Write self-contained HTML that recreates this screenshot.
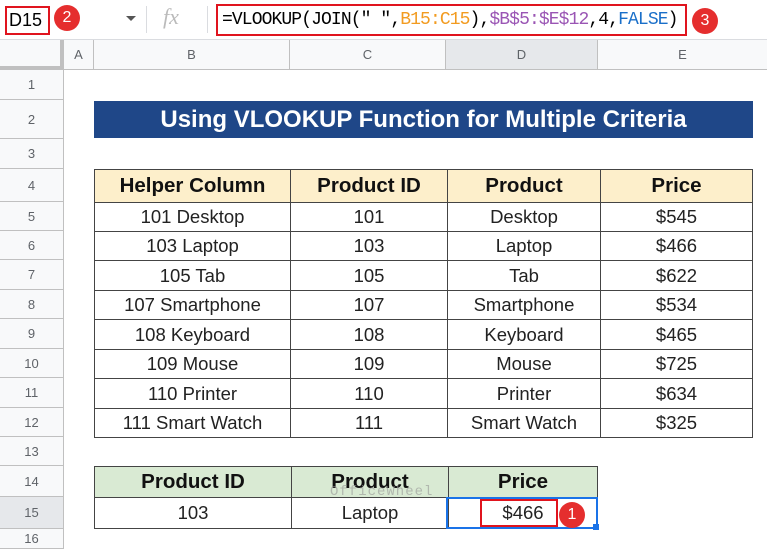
<!DOCTYPE html>
<html><head><style>
body{margin:0;width:767px;height:540px;overflow:hidden;background:#fff;font-family:"Liberation Sans",Arial,sans-serif;position:relative}
.a{position:absolute;box-sizing:border-box}
.rh{position:absolute;left:0;width:64px;background:#f8f9fa;border-bottom:1px solid #c0c0c0;border-right:1px solid #c0c0c0;color:#5f6368;font-size:13px;text-align:center;display:flex;align-items:center;justify-content:center;box-sizing:border-box}
.ch{position:absolute;top:40px;height:30px;background:#f8f9fa;border-right:1px solid #c0c0c0;border-bottom:1px solid #c0c0c0;color:#5f6368;font-size:13px;display:flex;align-items:center;justify-content:center;box-sizing:border-box}
table{position:absolute;border-collapse:collapse;font-size:18.5px;color:#222}
td{border:1.5px solid #444;text-align:center;padding:0}
th{border:1.5px solid #444;font-size:20.5px;font-weight:bold;color:#111;padding:0}
.badge{position:absolute;width:26px;height:26px;border-radius:50%;background:#e52e2e;color:#fff;font-size:16px;display:flex;align-items:center;justify-content:center;box-sizing:border-box}
</style></head><body>
<div class="a" style="left:0;top:0;width:767px;height:40px;border-bottom:1px solid #dadce0"></div>
<div class="a" style="left:5px;top:6px;width:45px;height:29px;border:2.5px solid #e0141e;font-size:18px;padding:2px 0 0 2px">D15</div>
<div class="badge" style="left:54px;top:5px">2</div>
<div class="a" style="left:126px;top:16px;width:0;height:0;border-left:5px solid transparent;border-right:5px solid transparent;border-top:5px solid #555"></div>
<div class="a" style="left:146px;top:6px;width:1px;height:27px;background:#dadce0"></div>
<div class="a" style="left:163px;top:4px;font-family:'Liberation Serif',serif;font-style:italic;font-size:22px;color:#bbb">fx</div>
<div class="a" style="left:207px;top:6px;width:1px;height:27px;background:#dadce0"></div>
<div class="a" style="left:216px;top:4px;width:471px;height:32px;border:2.5px solid #e0141e;font-family:'Liberation Mono',monospace;font-size:18px;padding:4px 0 0 4px;letter-spacing:-0.9px;white-space:nowrap;overflow:hidden">=VLOOKUP(JOIN(" ",<span style="color:#f29b20">B15:C15</span>),<span style="color:#9a55b4">$B$5:$E$12</span>,4,<span style="color:#1a6fc9">FALSE</span>)</div>
<div class="badge" style="left:692px;top:8px">3</div>
<div class="a" style="left:0;top:40px;width:64px;height:30px;background:#f8f9fa;border-right:4px solid #c0c0c0;border-bottom:4px solid #c0c0c0"></div>
<div class="ch" style="left:64px;width:30px">A</div>
<div class="ch" style="left:94px;width:196px">B</div>
<div class="ch" style="left:290px;width:156px">C</div>
<div class="ch" style="left:446px;width:152px;background:#e6e8eb">D</div>
<div class="ch" style="left:598px;width:169px;border-right:none">E</div>
<div class="rh" style="top:70px;height:30px">1</div>
<div class="rh" style="top:100px;height:39px">2</div>
<div class="rh" style="top:139px;height:30px">3</div>
<div class="rh" style="top:169px;height:33px">4</div>
<div class="rh" style="top:202px;height:29px">5</div>
<div class="rh" style="top:231px;height:29px">6</div>
<div class="rh" style="top:260px;height:30px">7</div>
<div class="rh" style="top:290px;height:29px">8</div>
<div class="rh" style="top:319px;height:30px">9</div>
<div class="rh" style="top:349px;height:29px">10</div>
<div class="rh" style="top:378px;height:30px">11</div>
<div class="rh" style="top:408px;height:29px">12</div>
<div class="rh" style="top:437px;height:29px">13</div>
<div class="rh" style="top:466px;height:31px">14</div>
<div class="rh" style="top:497px;height:32px;background:#e6e8eb">15</div>
<div class="rh" style="top:529px;height:20px">16</div>
<div class="a" style="left:94px;top:101px;width:659px;height:37px;background:#1f4788;color:#fff;font-weight:bold;font-size:24px;text-align:center;line-height:37px">Using VLOOKUP Function for Multiple Criteria</div>
<table style="left:94px;top:169px;width:659px">
<tr style="height:33px;background:#fdefcb"><th style="width:195px">Helper Column</th><th style="width:156px">Product ID</th><th style="width:152px">Product</th><th>Price</th></tr>
<tr style="height:29px"><td>101 Desktop</td><td>101</td><td>Desktop</td><td>$545</td></tr>
<tr style="height:29px"><td>103 Laptop</td><td>103</td><td>Laptop</td><td>$466</td></tr>
<tr style="height:30px"><td>105 Tab</td><td>105</td><td>Tab</td><td>$622</td></tr>
<tr style="height:29px"><td>107 Smartphone</td><td>107</td><td>Smartphone</td><td>$534</td></tr>
<tr style="height:30px"><td>108 Keyboard</td><td>108</td><td>Keyboard</td><td>$465</td></tr>
<tr style="height:29px"><td>109 Mouse</td><td>109</td><td>Mouse</td><td>$725</td></tr>
<tr style="height:30px"><td>110 Printer</td><td>110</td><td>Printer</td><td>$634</td></tr>
<tr style="height:29px"><td>111 Smart Watch</td><td>111</td><td>Smart Watch</td><td>$325</td></tr>
</table>
<table style="left:94px;top:466px;width:504px">
<tr style="height:31px;background:#d9ead3"><th style="width:196px">Product ID</th><th style="width:156px">Product</th><th>Price</th></tr>
<tr style="height:31px"><td>103</td><td>Laptop</td><td>$466</td></tr>
</table>
<div class="a" style="left:446px;top:497px;width:152px;height:32px;border:2px solid #1a73e8"></div>
<div class="a" style="left:593px;top:524px;width:6px;height:6px;background:#1a73e8"></div>
<div class="a" style="left:480px;top:499px;width:78px;height:28px;border:2.5px solid #e0141e"></div>
<div class="badge" style="left:559px;top:502px">1</div>
<div class="a" style="left:330px;top:484px;color:rgba(150,150,150,0.6);font-size:14px;letter-spacing:1px;font-family:'Liberation Mono',monospace">OfficeWheel</div>
</body></html>
